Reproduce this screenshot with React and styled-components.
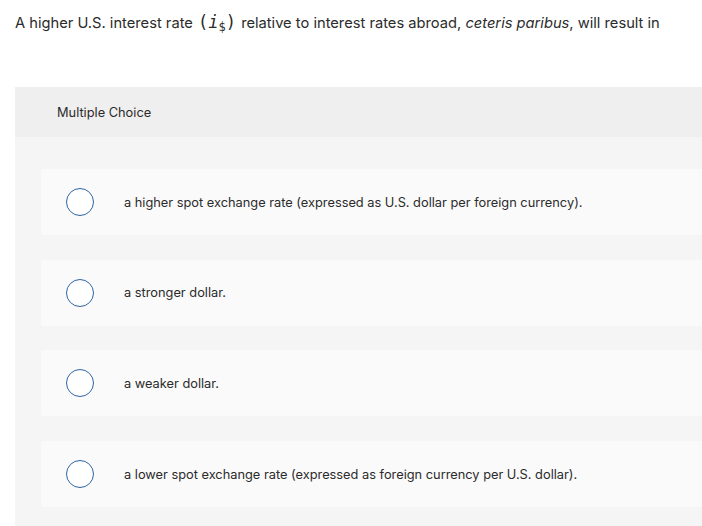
import React from "react";
import styled, { createGlobalStyle } from "styled-components";

const GlobalStyle = createGlobalStyle`
  html, body {
    margin: 0;
    padding: 0;
    background: #ffffff;
  }
  body {
    font-family: "Inter", "Helvetica Neue", Arial, sans-serif;
    color: #222;
    overflow: hidden;
  }
`;

const Page = styled.div`
  width: 702px;
  height: 526px;
  overflow: hidden;
  padding: 12px 0 0 15px;
  box-sizing: border-box;
`;

const Question = styled.p`
  margin: 0;
  font-size: 14.7px;
  line-height: 20px;
  color: #2b2b2b;
  white-space: nowrap;
`;

const MathVar = styled.span`
  font-family: "DejaVu Sans Mono", "Liberation Mono", monospace;
  font-size: 17px;
  color: #2b2b2b;
  margin: 0 1px;

  i {
    font-style: italic;
  }

  sub {
    font-size: 12px;
    vertical-align: -3px;
  }
`;

const Panel = styled.section`
  margin-top: 50px;
  background: #f5f5f5;
  padding-bottom: 20px;
`;

const PanelHeader = styled.div`
  height: 50px;
  background: #efefef;
  display: flex;
  align-items: center;
  padding-left: 42px;
  font-size: 12.8px;
  color: #2b2b2b;
`;

const Options = styled.div`
  display: flex;
  flex-direction: column;
  gap: 24.7px;
  padding: 32px 0 0 26px;
`;

const Option = styled.label`
  height: 66px;
  background: #fafafa;
  border-radius: 3px 0 0 3px;
  display: flex;
  align-items: center;
  padding-left: 25px;
  font-size: 12.8px;
  color: #2b2b2b;
  cursor: pointer;
`;

const Radio = styled.span`
  width: 26px;
  height: 26px;
  border-radius: 50%;
  border: 1.5px solid #2d64a3;
  background: #fff;
  flex: none;
  margin-right: 30px;
`;

const choices = [
  "a higher spot exchange rate (expressed as U.S. dollar per foreign currency).",
  "a stronger dollar.",
  "a weaker dollar.",
  "a lower spot exchange rate (expressed as foreign currency per U.S. dollar).",
];

export default function App() {
  return (
    <Page>
      <GlobalStyle />
      <Question>
        A higher U.S. interest rate{" "}
        <MathVar>
          (<i>i</i>
          <sub>$</sub>)
        </MathVar>{" "}
        relative to interest rates abroad, <em>ceteris paribus</em>, will result in
      </Question>
      <Panel>
        <PanelHeader>Multiple Choice</PanelHeader>
        <Options>
          {choices.map((c) => (
            <Option key={c}>
              <Radio />
              {c}
            </Option>
          ))}
        </Options>
      </Panel>
    </Page>
  );
}
